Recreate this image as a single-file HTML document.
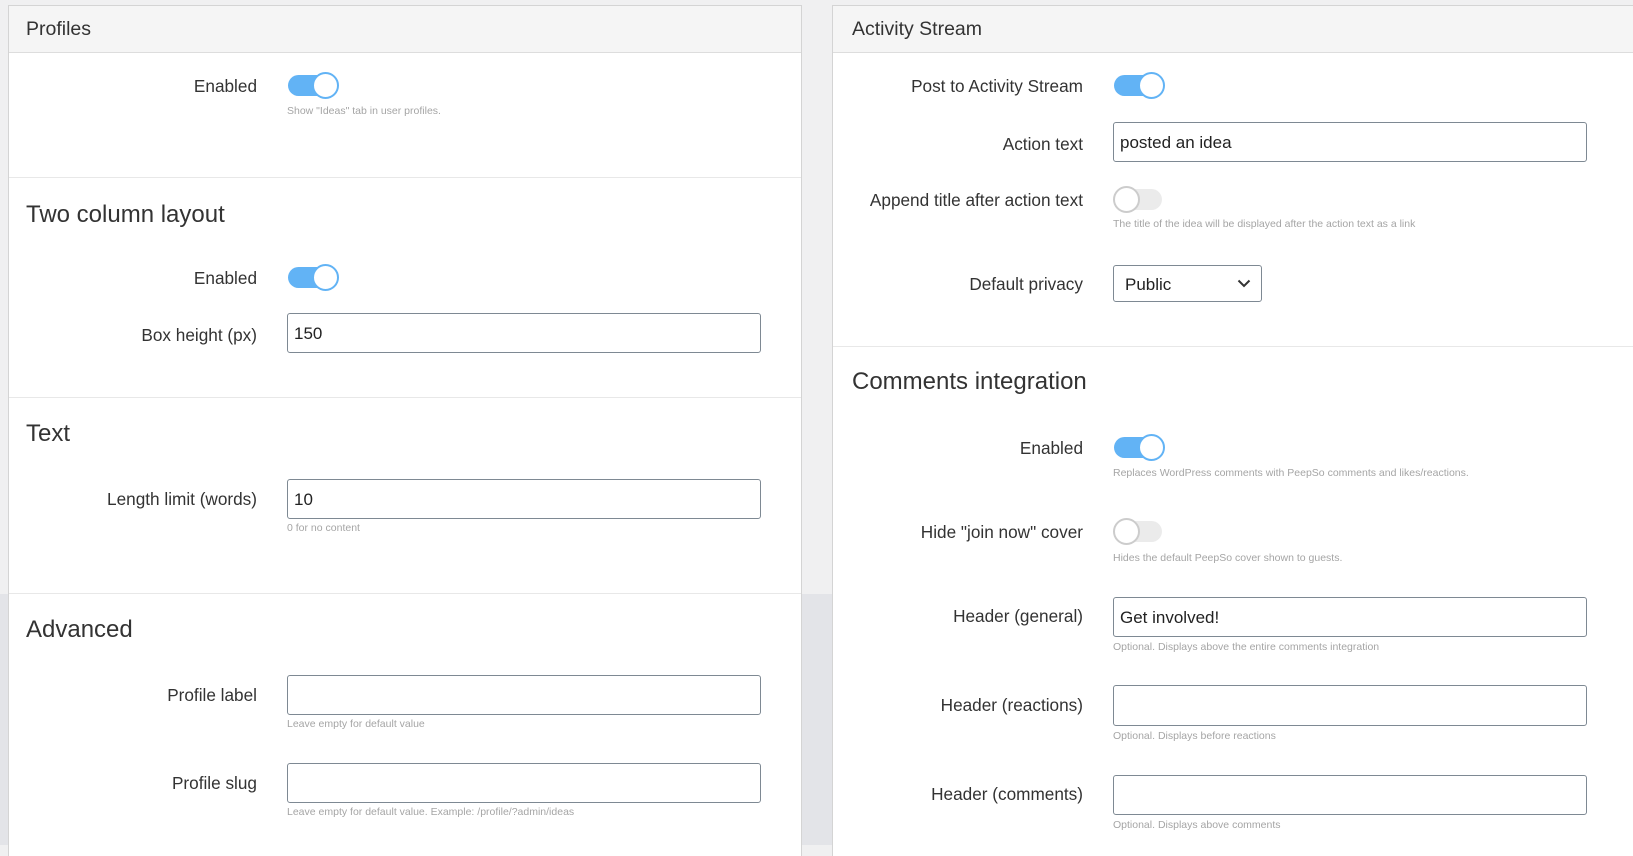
<!DOCTYPE html><html><head><style>
body{margin:0;width:1633px;height:845px;overflow:hidden;background:#f0f0f1;font-family:"Liberation Sans",sans-serif;position:relative}
.bg2{position:absolute;left:0;top:594px;width:1633px;height:251px;background:#e3e4e8}
.panel{position:absolute;top:5px;background:#fff;border:1px solid #d4d4d4;border-bottom:none;height:850px}
.hdr{position:absolute;left:0;right:0;top:0;height:46px;background:#f5f5f5;border-bottom:1px solid #ddd}
.hdr span{position:absolute;left:17px;top:12px;font-size:19.5px;color:#333}
.abs{position:absolute}
.lbl{position:absolute;font-size:17.2px;color:#333;text-align:right;line-height:20px;white-space:nowrap}
.help{position:absolute;font-size:10.5px;color:#a5a5a5;line-height:14px;white-space:nowrap}
.h2{position:absolute;font-size:24px;color:#333;line-height:28px}
.div{position:absolute;left:0;right:0;height:1px;background:#e8e8e8}
.inp{position:absolute;border:1px solid #7e8993;border-radius:3px;background:#fff;box-sizing:border-box;font-size:17px;color:#222;padding:10px 6px 0}
.tg{position:absolute;width:52px;height:27px}
.tg .tr{position:absolute;left:1px;top:3px;width:48px;height:21px;border-radius:11px;background:#62b3f5}
.tg .kn{position:absolute;left:25px;top:0;width:23px;height:23px;border-radius:50%;background:#fff;border:2px solid #62b3f5}
.tg.off .tr{background:#ebebeb}
.tg.off .kn{left:0;border-color:#ccc}
</style></head><body>
<div class="bg2"></div>
<div class="panel" style="left:8px;width:792px">
<div class="hdr"><span>Profiles</span></div>
</div>
<div class="panel" style="left:832px;width:801px;border-right:none">
<div class="hdr"><span style="left:19px">Activity Stream</span></div>
</div>
<div class="lbl" style="right:1376px;top:76px">Enabled</div>
<div class="tg" style="left:287px;top:72px"><div class="tr"></div><div class="kn"></div></div>
<div class="help" style="left:287px;top:104px">Show "Ideas" tab in user profiles.</div>
<div class="div" style="left:9px;width:792px;top:177px;right:auto"></div>
<div class="h2" style="left:26px;top:201px">Two column layout</div>
<div class="lbl" style="right:1376px;top:268px">Enabled</div>
<div class="tg" style="left:287px;top:264px"><div class="tr"></div><div class="kn"></div></div>
<div class="lbl" style="right:1376px;top:325px">Box height (px)</div>
<div class="inp" style="left:287px;top:313px;width:474px;height:40px">150</div>
<div class="div" style="left:9px;width:792px;top:397px;right:auto"></div>
<div class="h2" style="left:26px;top:420px">Text</div>
<div class="lbl" style="right:1376px;top:489px">Length limit (words)</div>
<div class="inp" style="left:287px;top:479px;width:474px;height:40px">10</div>
<div class="help" style="left:287px;top:521px">0 for no content</div>
<div class="div" style="left:9px;width:792px;top:593px;right:auto"></div>
<div class="h2" style="left:26px;top:616px">Advanced</div>
<div class="lbl" style="right:1376px;top:685px">Profile label</div>
<div class="inp" style="left:287px;top:675px;width:474px;height:40px"></div>
<div class="help" style="left:287px;top:717px">Leave empty for default value</div>
<div class="lbl" style="right:1376px;top:773px">Profile slug</div>
<div class="inp" style="left:287px;top:763px;width:474px;height:40px"></div>
<div class="help" style="left:287px;top:805px">Leave empty for default value. Example: /profile/?admin/ideas</div>
<div class="lbl" style="right:550px;top:76px">Post to Activity Stream</div>
<div class="tg" style="left:1113px;top:72px"><div class="tr"></div><div class="kn"></div></div>
<div class="lbl" style="right:550px;top:134px">Action text</div>
<div class="inp" style="left:1113px;top:122px;width:474px;height:40px">posted an idea</div>
<div class="lbl" style="right:550px;top:190px">Append title after action text</div>
<div class="tg off" style="left:1113px;top:186px"><div class="tr"></div><div class="kn"></div></div>
<div class="help" style="left:1113px;top:217px">The title of the idea will be displayed after the action text as a link</div>
<div class="lbl" style="right:550px;top:274px">Default privacy</div>
<div class="inp" style="left:1113px;top:265px;width:149px;height:37px;padding:9px 11px 0">Public
<svg class="abs" style="left:123px;top:13px" width="14" height="9" viewBox="0 0 14 9"><path d="M1.5 1.5 L7 7 L12.5 1.5" fill="none" stroke="#333" stroke-width="2"/></svg></div>
<div class="div" style="left:833px;top:346px;right:0"></div>
<div class="h2" style="left:852px;top:368px">Comments integration</div>
<div class="lbl" style="right:550px;top:438px">Enabled</div>
<div class="tg" style="left:1113px;top:434px"><div class="tr"></div><div class="kn"></div></div>
<div class="help" style="left:1113px;top:466px">Replaces WordPress comments with PeepSo comments and likes/reactions.</div>
<div class="lbl" style="right:550px;top:522px">Hide "join now" cover</div>
<div class="tg off" style="left:1113px;top:518px"><div class="tr"></div><div class="kn"></div></div>
<div class="help" style="left:1113px;top:551px">Hides the default PeepSo cover shown to guests.</div>
<div class="lbl" style="right:550px;top:606px">Header (general)</div>
<div class="inp" style="left:1113px;top:597px;width:474px;height:40px">Get involved!</div>
<div class="help" style="left:1113px;top:640px">Optional. Displays above the entire comments integration</div>
<div class="lbl" style="right:550px;top:695px">Header (reactions)</div>
<div class="inp" style="left:1113px;top:685px;width:474px;height:41px"></div>
<div class="help" style="left:1113px;top:729px">Optional. Displays before reactions</div>
<div class="lbl" style="right:550px;top:784px">Header (comments)</div>
<div class="inp" style="left:1113px;top:775px;width:474px;height:40px"></div>
<div class="help" style="left:1113px;top:818px">Optional. Displays above comments</div>
</body></html>
